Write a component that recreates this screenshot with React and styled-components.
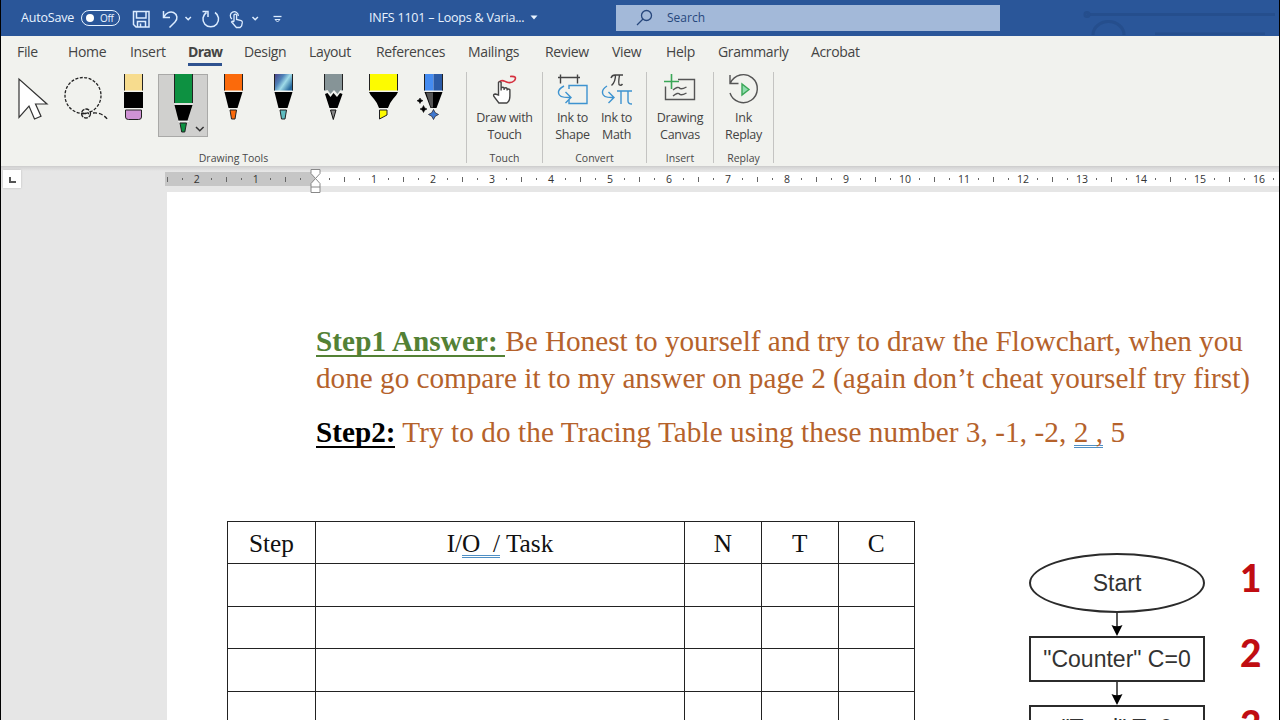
import React from 'react';
import styled, { createGlobalStyle } from 'styled-components';

const GlobalStyle = createGlobalStyle`
  * {
    box-sizing: border-box;
  }
  body {
    margin: 0;
    overflow: hidden;
    font-family: 'Open Sans', 'Noto Sans', sans-serif;
  }
  svg {
    display: block;
    flex: none;
  }
`;

const Window = styled.div`
  width: 1280px;
  height: 720px;
  overflow: hidden;
  display: flex;
  flex-direction: column;
  background: #e6e6e6;
  border-left: 1px solid #000;
  border-right: 1px solid #000;
`;

/* title bar */

const TitleBar = styled.header`
  flex: none;
  height: 36px;
  display: flex;
  align-items: center;
  position: relative;
  padding: 0 0 1px 20px;
  background: #2a5699;
  color: #e8f3ff;
  font-size: 12.5px;
  white-space: nowrap;
`;

const AutoSave = styled.span`
  width: 60px;
  letter-spacing: -0.2px;
`;

const Toggle = styled.span`
  width: 39px;
  height: 16px;
  display: flex;
  align-items: center;
  gap: 6px;
  padding-left: 4px;
  border: 1px solid #e8f3ff;
  border-radius: 8px;
  font-size: 10px;
  letter-spacing: -0.3px;
  &::before {
    content: '';
    width: 8px;
    height: 8px;
    border-radius: 50%;
    background: #fff;
  }
`;

const QuickIcons = styled.div`
  width: 249px;
  padding-left: 12px;
`;

const FileName = styled.span`
  width: 161px;
  letter-spacing: -0.2px;
`;

const SearchBox = styled.div`
  width: 384px;
  height: 26px;
  margin-left: 78px;
  padding-left: 20px;
  display: flex;
  align-items: center;
  gap: 13px;
  background: #a3b9d9;
  color: #27477c;
  font-size: 12px;
`;

const Ornament = styled.svg`
  position: absolute;
  right: 0;
  top: 0;
`;

/* ribbon */

const Tabs = styled.nav`
  flex: none;
  height: 31px;
  display: flex;
  padding-left: 16px;
  background: #f1f2ee;
  color: #444;
  font-size: 14px;
  line-height: 32px;
  white-space: nowrap;
`;

const Tab = styled.div`
  flex: none;
  width: ${(p) => p.$w}px;
  span {
    display: inline-block;
    height: 30px;
    letter-spacing: ${(p) => (p.$active ? '-0.7px' : '-0.35px')};
    font-weight: ${(p) => (p.$active ? 700 : 400)};
    border-bottom: ${(p) => (p.$active ? '3px solid #2f528f' : 'none')};
  }
`;

const Ribbon = styled.div`
  flex: none;
  height: 100px;
  display: flex;
  padding-top: 5px;
  background: #f1f2ee;
  border-bottom: 1px solid #cfcfcf;
  color: #444;
`;

const Group = styled.section`
  width: ${(p) => p.$w}px;
  height: 91px;
  display: flex;
  flex-direction: column;
  justify-content: space-between;
  border-right: 1px solid #c4c4c2;
`;

const GroupName = styled.div`
  text-align: center;
  font-size: 10.5px;
  line-height: 12px;
  height: 11px;
  color: #484848;
`;

const ToolRow = styled.div`
  display: flex;
  padding: 2px 0 0 7px;
`;

const Tool = styled.div`
  width: 50px;
  height: 63px;
  background: ${(p) => (p.$active ? '#d0d0ce' : 'transparent')};
  box-shadow: ${(p) => (p.$active ? 'inset 0 0 0 1px #a9a9a7' : 'none')};
`;

const CommandRow = styled.div`
  display: flex;
  justify-content: center;
`;

const Command = styled.div`
  width: ${(p) => p.$w}px;
  display: flex;
  flex-direction: column;
  align-items: center;
  text-align: center;
  white-space: pre-line;
  font-size: 12.5px;
  letter-spacing: -0.3px;
  line-height: 16.5px;
  svg {
    margin-bottom: 5px;
  }
`;

/* ruler */

const RulerRow = styled.div`
  flex: none;
  height: 25px;
  display: flex;
  align-items: flex-start;
  background: linear-gradient(#d4d4d4, #e6e6e6 4px);
`;

const TabStop = styled.div`
  width: 18px;
  height: 18px;
  margin: 3px 0 0 2px;
  padding: 7px 0 0 6px;
  background: #fff;
  box-shadow: 0 0 2px #bbb;
`;

const Ruler = styled.div`
  position: relative;
  flex: 1;
  height: 14px;
  margin: 5px 0 0 144px;
  display: flex;
  overflow: visible;
`;

const Scale = styled.div`
  width: ${(p) => p.$w}px;
  height: 14px;
  display: flex;
  overflow: hidden;
  background: ${(p) => (p.$margin ? '#c6c6c6' : '#fff')};
  padding-left: ${(p) => (p.$margin ? 2 : 7.3)}px;
`;

const Mark = styled.span`
  flex: none;
  width: 14.76px;
  height: 14px;
  display: flex;
  align-items: center;
  justify-content: center;
  font-size: 10.5px;
  line-height: 14px;
  color: #333;
  margin-left: ${(p) => (p.$first ? -6.5 : 0)}px;
  i {
    width: 1px;
    height: ${(p) => (p.$kind === 'tick' ? 5 : 2)}px;
    background: #666;
  }
`;

const Indent = styled.svg`
  position: absolute;
  left: 145px;
  top: -3px;
`;

/* document */

const Page = styled.main`
  flex: 1;
  margin-left: 166px;
  padding: 131px 0 0 60px;
  background: #fff;
  font-family: 'Liberation Serif', 'Times New Roman', serif;
`;

const Paragraph = styled.p`
  margin: 0 0 17px 89px;
  font-size: 29.2px;
  letter-spacing: ${(p) => p.$spacing || 0}px;
  line-height: 37px;
  color: #b5622b;
  white-space: nowrap;
`;

const Lead = styled.b`
  color: ${(p) => p.$color};
  border-bottom: 2px solid ${(p) => p.$color};
  display: inline-block;
  line-height: 28px;
  letter-spacing: ${(p) => p.$spacing || 0}px;
  white-space: pre;
`;

const Grammar = styled.span`
  display: inline-block;
  white-space: pre;
  line-height: ${(p) => p.$h}px;
  border-bottom: 3px double #4f8fc4;
`;

const Lower = styled.div`
  display: flex;
  align-items: flex-start;
  padding-top: 53px;
`;

const Table = styled.table`
  flex: none;
  width: 687px;
  border-collapse: collapse;
  table-layout: fixed;
  font-size: 25.3px;
  color: #111;
  th,
  td {
    height: 42.4px;
    padding: 0;
    border: 1px solid #222;
    font-weight: 400;
    line-height: 34px;
    text-align: center;
  }
  th {
    padding-top: 1px;
  }
`;

const Flowchart = styled.div`
  width: 176px;
  margin: 32px 0 0 114px;
  display: flex;
  flex-direction: column;
  align-items: center;
`;

const Node = styled.div`
  flex: none;
  width: 176px;
  height: ${(p) => (p.$round ? 60 : 46)}px;
  display: flex;
  align-items: center;
  justify-content: center;
  border: 2px solid #2b2b2b;
  border-radius: ${(p) => (p.$round ? '50%' : 0)};
  font: 23px 'Liberation Sans', Arial, sans-serif;
  color: #333;
  white-space: nowrap;
`;

const StepNumbers = styled.div`
  margin: 35px 0 0 35px;
  color: #c00d12;
  font: 900 37px/44px Lato, sans-serif;
  div {
    height: 75px;
  }
  div + div + div {
    margin-top: -4px;
  }
`;

const tabs = [
  ['File', 51],
  ['Home', 62],
  ['Insert', 58],
  ['Draw', 56],
  ['Design', 65],
  ['Layout', 67],
  ['References', 92],
  ['Mailings', 77],
  ['Review', 67],
  ['View', 54],
  ['Help', 52],
  ['Grammarly', 93],
  ['Acrobat', 60],
];

const leftMarks = ['tick', 'dot', '2', 'dot', 'tick', 'dot', '1', 'dot', 'tick', 'dot'];
const rightMarks = Array.from({ length: 16 }, (_, i) => ['dot', 'tick', 'dot', String(i + 1)])
  .flat()
  .concat('dot');

function Marks({ marks, shift }) {
  return marks.map((m, i) => (
    <Mark key={i} $kind={m} $first={shift && i === 0}>
      {m === 'dot' || m === 'tick' ? <i /> : m}
    </Mark>
  ));
}

function QuickAccess() {
  return (
    <svg width="160" height="34" fill="none" stroke="#dcecff" strokeWidth="1.5">
      <path d="M1.5 10.5h15.5v15.5h-13l-2.500-2.500zM4.500 10.500v6.500h9.500v-6.500M5.500 26v-5.500h8v5.500M8.500 22.500v3.500" />
      <path d="M31.500 10v6.500h6.500M32 16c2-4 6-6 9.500-4.500c4 2 4.500 6.500 1.500 9.500l-5.500 5.500" />
      <path d="M53.500 16l2.700 2.700 2.700-2.700M120.500 16l2.700 2.700 2.700-2.700" />
      <path d="M70.500 10.500h5.500v5.500M83 11.500a7.800 7.800 0 1 1-8.500 0" />
      <g strokeWidth="1.300">
        <path d="M100 18a4 4 0 1 1 6.300-3" />
        <path d="M102 20.500v-6.500q1.300-1.800 2.600 0v4.500l4.600 1.200q1.300.5 1.100 2l-.7 3.300-1.600 1.500h-3.600l-4.900-5.500q.9-1.500 2.500 0" />
      </g>
      <path d="M141.500 15.500h8" strokeWidth="1.300" />
      <path d="M143 18.500h5l-2.500 2.500z" strokeWidth="1" />
    </svg>
  );
}

function Marker({ color, tip }) {
  return (
    <svg width="50" height="63">
      <path d="M16 0h19v16.500h-19z" fill={color} />
      <path d="M16.500 0v16.500M34.500 0v16.500" stroke="#222" />
      <path d="M16.500 18h18l-5 16h-9z" />
      <path d="M22 36h6.500l-1.500 9h-3.500z" fill={tip || color} stroke="#222" />
    </svg>
  );
}

function Tools() {
  return (
    <ToolRow>
      <Tool>
        <svg width="50" height="63" fill="#fff" stroke="#333" strokeWidth="1.200">
          <path d="M11 5v38.500l10-11.500 5.500 13 6.500-2.800-5.500-12.200h11.500z" />
        </svg>
      </Tool>
      <Tool>
        <svg width="50" height="63" fill="none" stroke="#222" strokeWidth="1.300">
          <circle cx="25" cy="21.500" r="18" strokeDasharray="3 1.500" />
          <circle cx="28" cy="39.500" r="4.500" strokeDasharray="4 1" />
          <path d="M24 39.500h7M35 39q9-1 15 7" strokeDasharray="4 2" />
        </svg>
      </Tool>
      <Tool>
        <svg width="50" height="63">
          <path d="M16 0h19v16.500h-19z" fill="#f7dc8e" />
          <path d="M16.500 0v16.500M34.500 0v16.500" stroke="#222" />
          <path d="M16 18h19v16h-19z" />
          <path d="M17.500 36h16v7q0 2.500-3 2.500h-10q-3 0-3-2.500z" fill="#cf92d4" stroke="#222" />
        </svg>
      </Tool>
      <Tool $active>
        <svg width="50" height="63">
          <path d="M16 0h19v29h-19z" fill="#0d9141" />
          <path d="M16.500 0v29M34.500 0v29" stroke="#222" />
          <path d="M16 30h19M20 47.500h11" stroke="#eee" />
          <path d="M16.500 31h18l-5 15.500h-9z" />
          <path d="M22 49h6.500l-1.700 9h-3.100z" fill="#0d9141" stroke="#222" />
          <path d="M38 53l3.800 3.800 3.800-3.800" fill="none" stroke="#333" strokeWidth="1.500" />
        </svg>
      </Tool>
      <Tool>
        <Marker color="#fb6a0b" />
      </Tool>
      <Tool>
        <svg width="0" height="0">
          <linearGradient id="galaxy" x2="1" y2=".6">
            <stop offset="0" stopColor="#4a3b82" />
            <stop offset=".4" stopColor="#4f83b8" />
            <stop offset=".65" stopColor="#9fdbe8" />
            <stop offset="1" stopColor="#276a9e" />
          </linearGradient>
        </svg>
        <Marker color="url(#galaxy)" tip="#5fbcc0" />
      </Tool>
      <Tool>
        <svg width="50" height="63">
          <path d="M16 0h19v17l-2.500-1-3 4-3.500-4-3.500 4-3-4-3.500 1z" fill="#869497" />
          <path d="M16.500 0v16M34.500 0v16" stroke="#222" />
          <path d="M17 20l2.500-1 3 4 3-4 3.500 4 3-4 2.500 1-5 14h-8z" />
          <path d="M22.500 36h5.500l-2.700 9.500z" fill="#888" stroke="#111" />
        </svg>
      </Tool>
      <Tool>
        <svg width="50" height="63">
          <path d="M11 0h29v16.500h-29z" fill="#fdfb00" />
          <path d="M11.500 0v16.500M39.500 0v16.500" stroke="#222" />
          <path d="M11 18h29q-1 3-5 7-3.500 4-5 9h-9q-1.500-5-5-9-4-4-5-7z" />
          <path d="M21.500 36h7.500v5l-7.500 4z" fill="#fdfb00" stroke="#222" />
        </svg>
      </Tool>
      <Tool>
        <svg width="50" height="63">
          <path d="M16 0h9.500v16.500h-9.500z" fill="#448bf0" />
          <path d="M25.500 0h9.500v16.500h-9.500z" fill="#2b5ba6" />
          <path d="M16.500 0v16.500M34.500 0v16.500" stroke="#222" />
          <path d="M16.500 18h18l-6 16h-6z" />
          <path d="M18 18.500h7v15h-2z" fill="#555" />
          <path d="M25.500 35.500q1 4 5 5-4 1-5 5-1-4-5-5 4-1 5-5z" fill="#3f78cf" stroke="#223" strokeWidth=".8" />
          <path d="M15.500 31.500q.6 3 3.500 3.500-2.900.5-3.500 3.500-.6-3-3.500-3.500 2.900-.5 3.500-3.500zM12 24q.5 2.200 3 2.700-2.500.5-3 2.800-.5-2.300-3-2.800 2.500-.5 3-2.700z" stroke="#111" strokeWidth=".6" />
        </svg>
      </Tool>
    </ToolRow>
  );
}

function RibbonBody() {
  return (
    <Ribbon>
      <Group $w={466}>
        <Tools />
        <GroupName>Drawing Tools</GroupName>
      </Group>
      <Group $w={76}>
        <CommandRow>
          <Command $w={70}>
            <svg width="32" height="33" fill="none" stroke="#444" strokeWidth="1.400">
              <path d="M10 10c3-3 5-1 7.500 0s5.500 1 8-1.500c2-3 1-4.500-4.500-4" stroke="#d5303e" strokeWidth="1.600" />
              <path d="M9.500 23v-12.500q1.300-1.800 2.600 0v8-2.500q1.700-1.500 3 0v2-1.500q1.700-1.500 3 0v2-1q1.500-1.200 2.800.3v6.200q0 5-3 7h-8l-5-6.500q-1-2.500 1.500-2.500z" fill="#fff" />
            </svg>
            {'Draw with\nTouch'}
          </Command>
        </CommandRow>
        <GroupName>Touch</GroupName>
      </Group>
      <Group $w={104}>
        <CommandRow>
          <Command $w={44}>
            <svg width="32" height="33" fill="none" stroke="#444" strokeWidth="1.400">
              <path d="M1 5.500h22M3.500 2.500v9M20.500 2.500v9" />
              <path d="M12 17v-3.500h18v18h-18v-3.500" stroke="#3d93d0" />
              <path d="M7 14q-6 3-5.500 7 .5 5 12 4.500M8.500 20l5.500 5.500-5.500 5.500" stroke="#3d93d0" />
            </svg>
            {'Ink to\nShape'}
          </Command>
          <Command $w={44}>
            <svg width="32" height="33" fill="none" stroke="#444" strokeWidth="1.400">
              <path d="M10 6q1-3 4-3h8M14.500 3q0 7-4 10.500M18.500 3q-1.500 9 0 10t3-1" />
              <path d="M6 14q-5 3-4.500 7 .5 5 11 4.500M7.500 20l5.500 5.500-5.500 5.500" stroke="#3d93d0" />
              <path d="M16 19h15M20 19v13M27 19v10q0 3 4 3" stroke="#3d93d0" />
            </svg>
            {'Ink to\nMath'}
          </Command>
        </CommandRow>
        <GroupName>Convert</GroupName>
      </Group>
      <Group $w={67}>
        <CommandRow>
          <Command $w={60}>
            <svg width="32" height="33" fill="none" stroke="#555" strokeWidth="1.400">
              <path d="M14 7.500h16.500v20h-29v-13" />
              <path d="M9 18q5-4 6.500-2t7-1M9 24q5-4 6.500-2t7-1" />
              <path d="M7.500 2v15M0 9.500h15" stroke="#3aa757" strokeWidth="1.600" />
            </svg>
            {'Drawing\nCanvas'}
          </Command>
        </CommandRow>
        <GroupName>Insert</GroupName>
      </Group>
      <Group $w={60}>
        <CommandRow>
          <Command $w={56}>
            <svg width="32" height="33" fill="none" stroke="#555" strokeWidth="1.400">
              <path d="M2 3v8.500h8.500M2.500 11a14 14 0 1 1-.5 10" />
              <path d="M14 12v11l7-5.500z" fill="#8fdcae" stroke="#3aa757" />
            </svg>
            {'Ink\nReplay'}
          </Command>
        </CommandRow>
        <GroupName>Replay</GroupName>
      </Group>
    </Ribbon>
  );
}

function Arrow() {
  return (
    <svg width="14" height="23">
      <path d="M7 0v18" stroke="#222" strokeWidth="1.500" />
      <path d="M1.500 12q5.500 2.500 11 0l-5.500 11z" />
    </svg>
  );
}

function App() {
  return (
    <Window>
      <GlobalStyle />
      <TitleBar>
        <AutoSave>AutoSave</AutoSave>
        <Toggle>Off</Toggle>
        <QuickIcons>
          <QuickAccess />
        </QuickIcons>
        <FileName>INFS 1101 – Loops &amp; Varia...</FileName>
        <svg width="8" height="5" fill="#e8f3ff">
          <path d="M.5.500h7l-3.500 4z" />
        </svg>
        <SearchBox>
          <svg width="18" height="18" fill="none" stroke="#27477c" strokeWidth="1.300">
            <circle cx="10.500" cy="6.500" r="5" />
            <path d="M7 10l-6 6" />
          </svg>
          Search
        </SearchBox>
        <Ornament width="200" height="35" fill="none" stroke="#234b88" strokeWidth="3" opacity=".7">
          <path d="M8 14.500h188" />
          <path d="M14 35a15 13 0 0 1 31 0M76 34h110" />
          <circle cx="8" cy="14.500" r="2" />
        </Ornament>
      </TitleBar>
      <Tabs>
        {tabs.map(([name, w]) => (
          <Tab key={name} $w={w} $active={name === 'Draw'}>
            <span>{name}</span>
          </Tab>
        ))}
      </Tabs>
      <RibbonBody />
      <RulerRow>
        <TabStop>
          <svg width="7" height="6" fill="none" stroke="#555" strokeWidth="2">
            <path d="M1 0v5h6" />
          </svg>
        </TabStop>
        <Ruler>
          <Scale $w={150.5} $margin>
            <Marks marks={leftMarks} shift />
          </Scale>
          <Scale $w={964}>
            <Marks marks={rightMarks} />
          </Scale>
          <Indent width="11" height="24" fill="#fff" stroke="#888">
            <path d="M1 .500h9v4l-4.500 5-4.500-5zM1 23.500v-9l4.500-5 4.500 5v9zM1 18h9" />
          </Indent>
        </Ruler>
      </RulerRow>
      <Page>
        <Paragraph>
          <Lead $color="#538135" $spacing={0.08}>Step1 Answer: </Lead>
          Be Honest to yourself and try to draw the Flowchart, when you
          <br />
          done go compare it to my answer on page 2 (again don’t cheat yourself try first)
        </Paragraph>
        <Paragraph $spacing={0.08}>
          <Lead $color="#000">Step2:</Lead> Try to do the Tracing Table using these number 3, -1, -2,{' '}
          <Grammar $h={26}>2 ,</Grammar> 5
        </Paragraph>
        <Lower>
          <Table>
            <colgroup>
              <col width="88" />
              <col width="369" />
              <col width="77" />
              <col width="76.5" />
              <col width="76.5" />
            </colgroup>
            <thead>
              <tr>
                <th>Step</th>
                <th>
                  I/<Grammar $h={24}>{'O  /'}</Grammar> Task
                </th>
                <th>N</th>
                <th>T</th>
                <th>C</th>
              </tr>
            </thead>
            <tbody>
              {[1, 2, 3, 4].map((row) => (
                <tr key={row}>
                  <td />
                  <td />
                  <td />
                  <td />
                  <td />
                </tr>
              ))}
            </tbody>
          </Table>
          <Flowchart>
            <Node $round>Start</Node>
            <Arrow />
            <Node>"Counter" C=0</Node>
            <Arrow />
            <Node>"Total" T=0</Node>
          </Flowchart>
          <StepNumbers>
            <div>1</div>
            <div>2</div>
            <div>3</div>
          </StepNumbers>
        </Lower>
      </Page>
    </Window>
  );
}

export default App;
